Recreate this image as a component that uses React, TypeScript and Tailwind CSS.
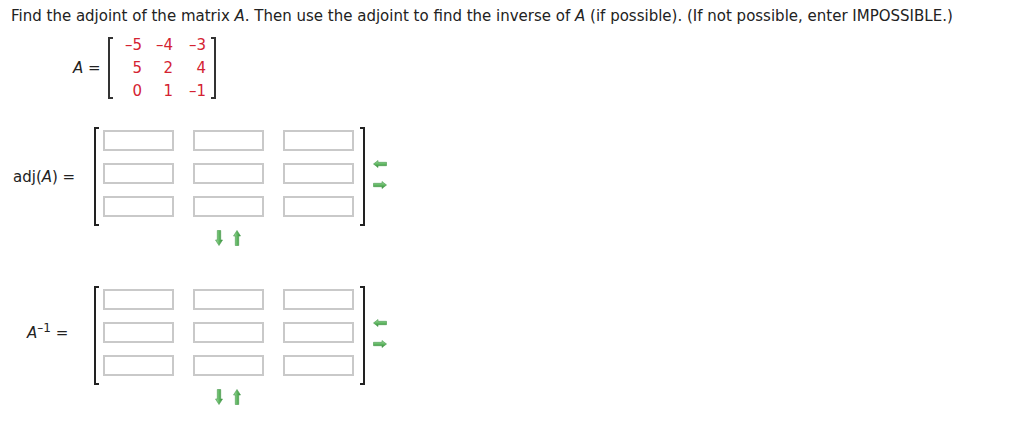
import type { FC } from "react";

const A = [
  ["–5", "–4", "–3"],
  ["5", "2", "4"],
  ["0", "1", "–1"],
];

const ArrowH: FC<{ dir: "left" | "right"; id: string }> = ({ dir, id }) => (
  <svg width="14" height="8" viewBox="0 0 14 8">
    <defs>
      <linearGradient id={id} x1="0" y1="0" x2="0" y2="1">
        <stop offset="0" stopColor="#a8e0a8" />
        <stop offset="0.5" stopColor="#62b864" />
        <stop offset="1" stopColor="#368e3a" />
      </linearGradient>
    </defs>
    <polygon
      points={
        dir === "left"
          ? "0.5,4 5,0.5 5,2.3 13.5,2.3 13.5,5.7 5,5.7 5,7.5"
          : "13.5,4 9,0.5 9,2.3 0.5,2.3 0.5,5.7 9,5.7 9,7.5"
      }
      fill={`url(#${id})`}
      stroke="#47984b"
      strokeWidth="0.6"
    />
  </svg>
);

const ArrowV: FC<{ dir: "up" | "down"; id: string }> = ({ dir, id }) => (
  <svg width="8" height="16" viewBox="0 0 8 16">
    <defs>
      <linearGradient id={id} x1="0" y1="0" x2="1" y2="0">
        <stop offset="0" stopColor="#a8e0a8" />
        <stop offset="0.5" stopColor="#62b864" />
        <stop offset="1" stopColor="#368e3a" />
      </linearGradient>
    </defs>
    <polygon
      points={
        dir === "down"
          ? "2.3,0.5 5.7,0.5 5.7,10 7.5,10 4,15.5 0.5,10 2.3,10"
          : "2.3,15.5 5.7,15.5 5.7,6 7.5,6 4,0.5 0.5,6 2.3,6"
      }
      fill={`url(#${id})`}
      stroke="#47984b"
      strokeWidth="0.6"
    />
  </svg>
);

const Box = () => (
  <div className="w-[71px] h-[21px] border-2 border-[#c9c9c9] bg-white" />
);

const InputMatrix: FC<{ tag: string }> = ({ tag }) => (
  <div className="flex flex-col">
    <div className="flex items-center">
      <div className="flex h-[99px]">
        <div className="w-[5px] border-l-2 border-y-2 border-[#222]" />
        <div className="flex flex-col gap-[12px] pl-[4px] pr-[6px] pt-[3px]">
          {[0, 1, 2].map((r) => (
            <div key={r} className="flex gap-[19px]">
              <Box />
              <Box />
              <Box />
            </div>
          ))}
        </div>
        <div className="w-[5px] border-r-2 border-y-2 border-[#222]" />
      </div>
      <div className="flex flex-col gap-[13px] ml-[8px] mb-[4px]">
        <ArrowH dir="left" id={`${tag}-l`} />
        <ArrowH dir="right" id={`${tag}-r`} />
      </div>
    </div>
    <div className="flex gap-[10px] ml-[121px] mt-[4px]">
      <ArrowV dir="down" id={`${tag}-d`} />
      <ArrowV dir="up" id={`${tag}-u`} />
    </div>
  </div>
);

export default function App() {
  return (
    <div
      className="w-[1024px] h-[433px] bg-white text-[15px] text-[#222] leading-[18px]"
      style={{ fontFamily: '"DejaVu Sans", Verdana, sans-serif' }}
    >
      <p className="pt-[7px] pl-[11px]">
        Find the adjoint of the matrix <i>A</i>. Then use the adjoint to find
        the inverse of <i>A</i> (if possible). (If not possible, enter
        IMPOSSIBLE.)
      </p>

      <div className="flex items-center mt-[12px] ml-[73px]">
        <span className="w-[35px]">
          <i>A</i> =
        </span>
        <div className="flex h-[62px]">
          <div className="w-[5px] border-l-2 border-y-2 border-[#333]" />
          <div className="grid grid-cols-[29px_31px_33px] auto-rows-[17px] gap-y-[6px] text-right text-[#d42332] pr-[5px] leading-[17px]">
            {A.flat().map((v, i) => (
              <span key={i}>{v}</span>
            ))}
          </div>
          <div className="w-[5px] border-r-2 border-y-2 border-[#333]" />
        </div>
      </div>

      <div className="flex mt-[28px]">
        <div className="w-[94px] pl-[13px] flex items-center h-[99px]">
          <span>
            adj(<i>A</i>) =
          </span>
        </div>
        <InputMatrix tag="adj" />
      </div>

      <div className="flex mt-[40px]">
        <div className="w-[94px] pl-[27px] flex items-center h-[94px]">
          <span>
            <i>A</i>
            <sup className="text-[12px]">–1</sup> =
          </span>
        </div>
        <InputMatrix tag="inv" />
      </div>
    </div>
  );
}
